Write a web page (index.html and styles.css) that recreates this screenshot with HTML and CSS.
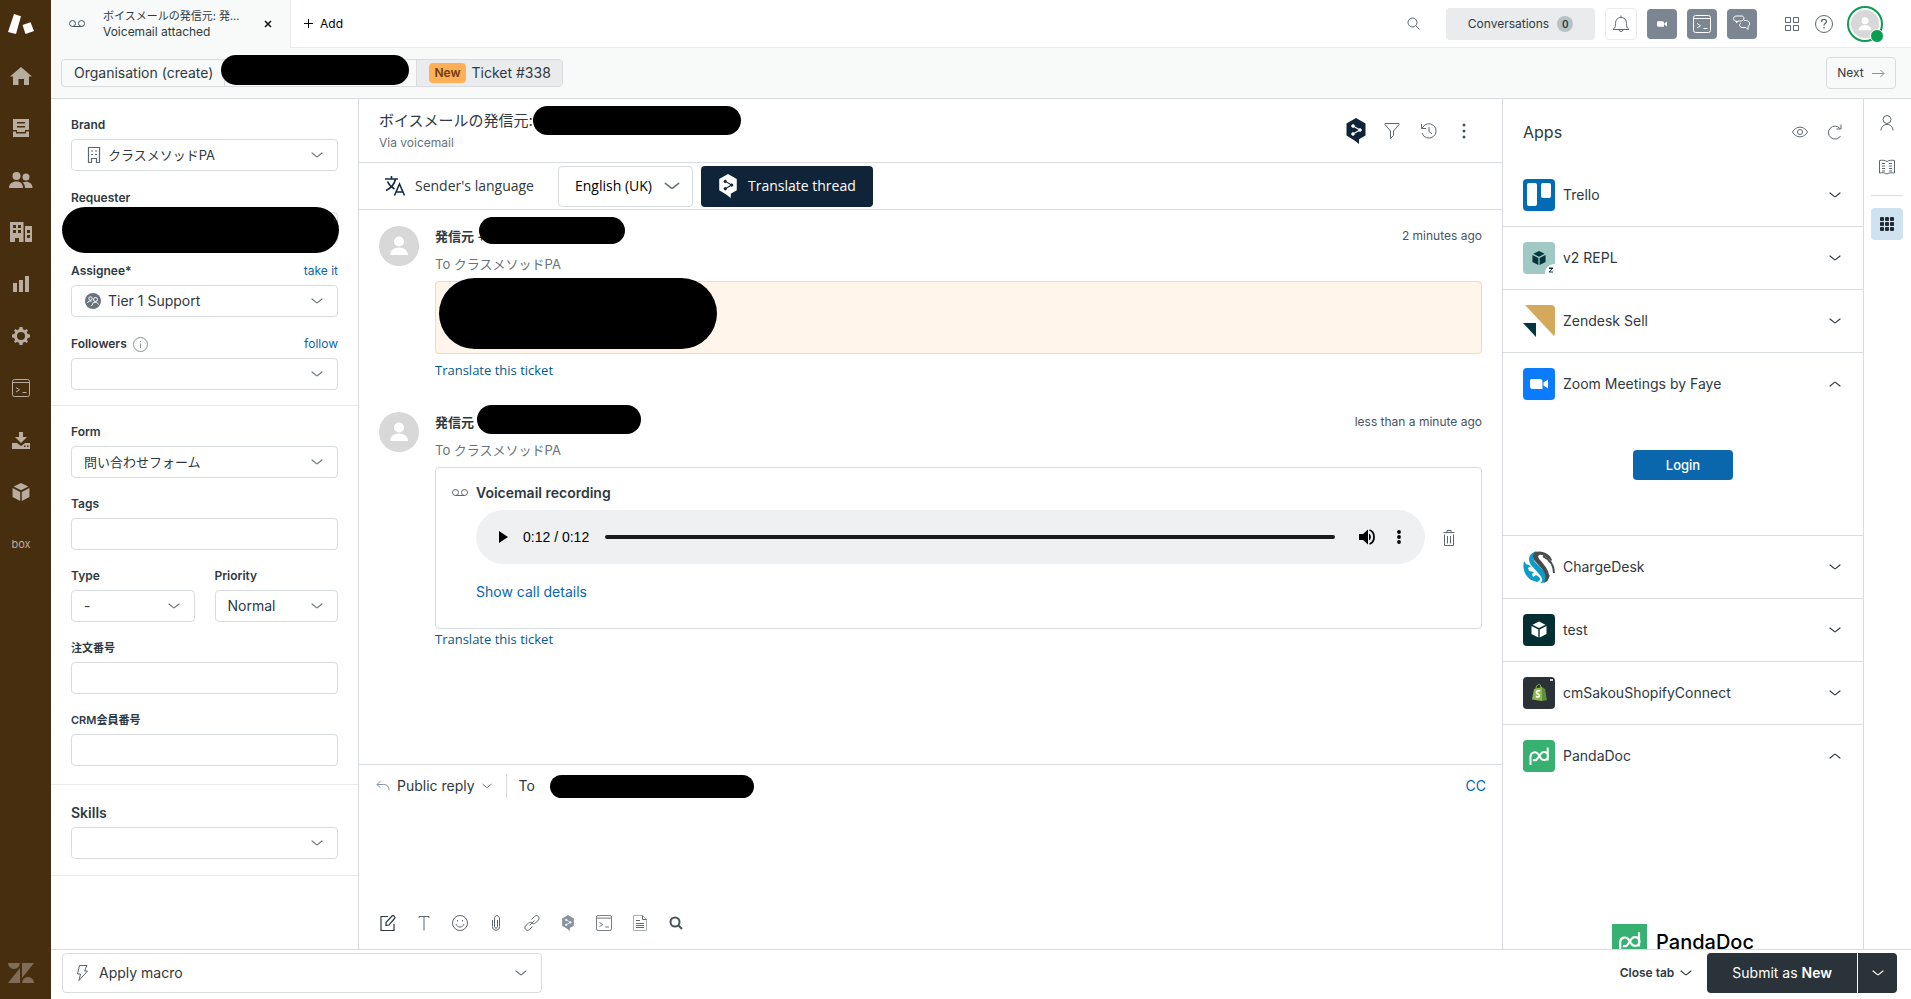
FILE: index.html
```html
<!DOCTYPE html>
<html lang="en">
<head>
    <meta charset="utf-8">
    <title>Ticket #338</title>
    <link rel="stylesheet" href="styles.css">
</head>
<body>
    <!-- shared icons -->
    <svg class="sprite" aria-hidden="true">
        <symbol id="chevron-down" viewBox="0 0 12 12"><path d="M1 4 L5.5 7.6 Q6 8 6.5 7.6 L11 4" fill="none" stroke="currentColor" stroke-width="1.2" stroke-linecap="round"/></symbol>
        <symbol id="chevron-up" viewBox="0 0 12 12"><path d="M1 8 L5.5 4.4 Q6 4 6.5 4.4 L11 8" fill="none" stroke="currentColor" stroke-width="1.2" stroke-linecap="round"/></symbol>
        <symbol id="voicemail" viewBox="0 0 16 16"><g fill="none" stroke="currentColor"><circle cx="3.5" cy="7.5" r="3"/><circle cx="12.5" cy="7.5" r="3"/><path d="M3.5 10.5h9"/></g></symbol>
        <symbol id="terminal" viewBox="0 0 18 18"><g fill="none" stroke="currentColor"><rect x=".5" y=".5" width="17" height="17" rx="2"/><path d="M.5 3.5h17M4 8.5l3.5 2.3L4 13M10.5 13.5h4"/></g></symbol>
        <symbol id="person" viewBox="0 0 40 40"><circle cx="20" cy="20" r="20" fill="#d8d8d8"/><circle cx="20" cy="15.5" r="5" fill="#fff"/><path d="M11 29c0-4.5 4-7.5 9-7.5s9 3 9 7.5z" fill="#fff"/></symbol>
        <symbol id="cube" viewBox="0 0 16 16"><path d="M8 0l6.5 3.2L8 6.5 1.5 3.2zM.5 4.5L7.3 8v8L.5 12.5zM15.5 4.5L8.7 8v8l6.800-3.5z" fill="currentColor"/></symbol>
        <symbol id="deepl" viewBox="0 0 20 26"><path d="M10 0l9.500 5.500v12L13 21.300V26l-4.500-3.500L.5 17.500v-12z" fill="currentColor"/><g fill="var(--dot)" stroke="var(--dot)"><path d="M7 8l7 4-7 4" fill="none" stroke-width="1.200"/><circle cx="7" cy="8" r="1.300"/><circle cx="14" cy="12" r="1.300"/><circle cx="7" cy="16" r="1.300"/></g></symbol>
        <symbol id="camera" viewBox="0 0 18 10"><path d="M0 1.500Q0 0 1.500 0H10q2.500 0 2.500 2.500V10H3Q0 10 0 7.500zM13.500 3.500L18 .5v9l-4.500-3z" fill="currentColor"/></symbol>
        <symbol id="pandadoc" viewBox="0 0 32 32"><path fill="#36b171" d="M0 0h32v32H0z"/><path d="M7.500 25V16.500a4.300 4.300 0 0 1 8-2l2.500 4a4 4 0 1 0 0-5l-3 4.500a4.200 4.200 0 0 1-5 2M24.700 7.500v13" fill="none" stroke="#fff" stroke-width="2"/></symbol>
    </svg>

    <div class="app">
        <nav class="sidebar">
            <a href="#" class="logo" aria-label="Support"><svg width="26" height="20" viewBox="0 0 26 20" fill="#fff"><path d="M6 0l7 2.200L8 20 0 18zM14.500 11l8-2.800L26 17l-8.500 3z"/></svg></a>
            <a href="#" aria-label="Home"><svg width="22" height="18" viewBox="0 0 22 18"><path d="M11 0L22 9.500h-3V18h-5v-6H8.500v6H3V9.500H0z"/></svg></a>
            <a href="#" aria-label="Views"><svg width="16" height="18" viewBox="0 0 16 18"><path fill-rule="evenodd" d="M0 0h16v11h-4v2H4v-2H0zM4 3v1.500h8V3zM4 7v1.500h8V7zM0 12.500h3v2h10v-2h3V18H0z"/></svg></a>
            <a href="#" aria-label="Customers"><svg width="24" height="16" viewBox="0 0 24 16"><circle cx="7.500" cy="4" r="4"/><circle cx="17" cy="5" r="3.500"/><path d="M0 16c0-4 3-6.500 7.500-6.500S14 12 14 16zM16 16c0-2.500-1-4.500-2.500-5.700 5-1.800 10 .2 10 5.700z"/></svg></a>
            <a href="#" aria-label="Organisations"><svg width="22" height="20" viewBox="0 0 22 20"><path fill-rule="evenodd" d="M0 0h13.500v20H9v-4H5v4H0zM3 3v3h3V3zM8 3v3h3V3zM3 8v3h3V8zM8 8v3h3V8zM15 4h7v16h-7zM17 8v3h3V8zM17 13v3h3v-3z"/></svg></a>
            <a href="#" aria-label="Reporting"><svg width="16" height="16" viewBox="0 0 16 16"><path d="M0 7h4v9H0zM6 4h4v12H6zM12 0h4v16h-4z"/></svg></a>
            <a href="#" aria-label="Admin"><svg width="18" height="18" viewBox="0 0 18 18"><circle cx="9" cy="9" r="5.500" fill="none" stroke="#b9ad9f" stroke-width="3"/><path d="M7.500 0h3l.5 3H7zM7.500 18h3l.5-3H7zM0 7.500v3l3 .5V7zM18 7.500v3l-3 .5V7zM2 3.500L3.500 2 6 4 4 6zM16 3.500L14.500 2 12 4l2 2zM2 14.500L3.500 16 6 14l-2-2zM16 14.500L14.500 16 12 14l2-2z"/></svg></a>
            <a href="#" aria-label="Console"><svg width="18" height="18"><use href="#terminal"/></svg></a>
            <a href="#" aria-label="Downloads"><svg width="18" height="17" viewBox="0 0 18 17"><path fill-rule="evenodd" d="M7 0h4v5h4L9 11 3 5h4zM0 11h5l4 3 4-3h5v6H0zM12 13.500V15h1.500v-1.500zM15 13.500V15h1.500v-1.500z"/></svg></a>
            <a href="#" aria-label="Apps"><svg width="18" height="18"><use href="#cube"/></svg></a>
            <a href="#" class="box-link">box</a>
            <a href="#" class="zendesk" aria-label="Zendesk"><svg width="26" height="20" viewBox="0 0 26 20"><path d="M0 0h12a6 6 0 0 1-12 0zM12 5v15H0zM14 0h12L14 15zM14 20a6 6 0 0 1 12 0z"/></svg></a>
        </nav>

        <div class="page">
            <header class="topbar">
                <div class="tab">
                    <svg width="16" height="16"><use href="#voicemail"/></svg>
                    <div class="tab-text">
                        <div class="tab-title">ボイスメールの発信元: 発...</div>
                        <div>Voicemail attached</div>
                    </div>
                    <button class="tab-close" aria-label="Close"><svg width="8" height="8" viewBox="0 0 8 8"><path d="M1 1l6 6M7 1L1 7" stroke="#111" stroke-width="1.500"/></svg></button>
                </div>
                <div class="topbar-rest">
                    <button class="add"><svg width="9" height="9" viewBox="0 0 9 9"><path d="M4.500 0v9M0 4.500h9" stroke="#000"/></svg>Add</button>
                    <div class="top-tools">
                        <button class="search" aria-label="Search"><svg class="line" width="13" height="13" viewBox="0 0 13 13"><circle cx="5.500" cy="5.500" r="4.500"/><path d="M9 9l3.500 3.500"/></svg></button>
                        <button class="conversations">Conversations <span>0</span></button>
                        <button class="tool bell" aria-label="Notifications"><svg class="line" width="18" height="18" viewBox="0 0 18 18"><path d="M9 .5v2M1 14.500c2-1.500 2.500-3 2.500-6C3.500 4.500 6 2.500 9 2.500s5.500 2 5.500 6c0 3 .5 4.500 2.500 6zM7 14.500a2 2 0 0 0 4 0"/></svg></button>
                        <button class="tool grey" aria-label="Zoom"><svg width="10" height="6"><use href="#camera"/></svg></button>
                        <button class="tool grey" aria-label="Console"><svg width="18" height="18"><use href="#terminal"/></svg></button>
                        <button class="tool grey" aria-label="Chat"><svg width="18" height="18" viewBox="0 0 18 18" fill="none" stroke="currentColor"><path d="M2 6C0 5 0 1.500 3 1h6c2.500.2 3 4-.5 5H5L3.500 8V6zM11 5.500h2.500C17 6 17.500 10 15 11.500v3L13 12.500H9C6 12 6 9 8 8"/></svg></button>
                        <button class="plain products" aria-label="Products"><svg class="line" width="14" height="14" viewBox="0 0 14 14"><path d="M.5.5h5v5h-5zM8.500.5h5v5h-5zM.5 8.500h5v5h-5zM8.500 8.500h5v5h-5z"/></svg></button>
                        <button class="plain" aria-label="Help"><svg class="line" width="18" height="18" viewBox="0 0 18 18"><circle cx="9" cy="9" r="8.500"/><path d="M6.500 7c0-3.500 5-3.200 5-.5 0 1.800-2.500 1.700-2.500 4M9 12v1.500" stroke-width="1.300"/></svg></button>
                        <button class="plain profile" aria-label="Profile"><svg width="36" height="36" viewBox="0 0 36 36"><circle cx="18" cy="18" r="17" fill="#fff" stroke="#0b9e53" stroke-width="2"/><use href="#person" x="4" y="4" width="28" height="28"/><circle cx="30" cy="30" r="6.500" fill="#0b9e53" stroke="#fff"/></svg></button>
                    </div>
                </div>
            </header>

            <div class="crumbs">
                <div class="crumb-group">
                    <a href="#">Organisation (create)</a>
                    <a href="#" class="crumb-user" aria-label="Requester"><span class="redacted"></span></a>
                    <a href="#" class="current"><b class="badge">New</b>Ticket #338</a>
                </div>
                <button class="next">Next <svg width="13" height="9" viewBox="0 0 13 9" fill="none" stroke="#87929d"><path d="M0 4.500h12M8.500 1L12 4.500 8.500 8"/></svg></button>
            </div>

            <main class="workspace">
                <form class="properties">
                    <section class="people">
                        <div class="field">
                            <label for="brand">Brand</label>
                            <div class="control">
                                <svg class="line" width="20" height="16" viewBox="0 0 20 16"><path d="M4.500.5h11v15h-3v-4h-5v4h-3zM7 4h2M11 4h2M7 7.500h2M11 7.500h2" stroke-width="1.200"/></svg>
                                <select id="brand" class="ja"><option>クラスメソッドPA</option></select>
                                <svg width="12" height="12"><use href="#chevron-down"/></svg>
                            </div>
                        </div>
                        <div class="field">
                            <label for="requester">Requester</label>
                            <div class="control">
                                <input id="requester" type="text">
                                <span class="redacted requester"></span>
                            </div>
                        </div>
                        <div class="field">
                            <div class="label-row"><label for="assignee">Assignee*</label><a href="#">take it</a></div>
                            <div class="control">
                                <svg width="20" height="16" viewBox="0 0 20 16"><circle cx="9" cy="8" r="8" fill="#68737d"/><g fill="none" stroke="#fff"><circle cx="6.500" cy="5.500" r="1.700"/><circle cx="11.500" cy="6.500" r="2"/><path d="M3.500 10c.5-2 2.500-2.500 4-1.500M7.500 13l2-3.500c2-1 4 0 5 2"/></g></svg>
                                <select id="assignee"><option>Tier 1 Support</option></select>
                                <svg width="12" height="12"><use href="#chevron-down"/></svg>
                            </div>
                        </div>
                        <div class="field">
                            <div class="label-row"><label for="followers">Followers</label><svg width="15" height="15" viewBox="0 0 15 15" fill="none" stroke="#87929d"><circle cx="7.500" cy="7.500" r="7"/><path d="M7.500 6.500V11M7.500 4v1"/></svg><a href="#">follow</a></div>
                            <div class="control">
                                <select id="followers"><option></option></select>
                                <svg width="12" height="12"><use href="#chevron-down"/></svg>
                            </div>
                        </div>
                    </section>
                    <section>
                        <div class="field">
                            <label for="form">Form</label>
                            <div class="control">
                                <select id="form" class="ja"><option>問い合わせフォーム</option></select>
                                <svg width="12" height="12"><use href="#chevron-down"/></svg>
                            </div>
                        </div>
                        <div class="field">
                            <label for="tags">Tags</label>
                            <div class="control"><input id="tags" type="text"></div>
                        </div>
                        <div class="pair">
                            <div class="field">
                                <label for="type">Type</label>
                                <div class="control">
                                    <select id="type"><option>-</option></select>
                                    <svg width="12" height="12"><use href="#chevron-down"/></svg>
                                </div>
                            </div>
                            <div class="field">
                                <label for="priority">Priority</label>
                                <div class="control">
                                    <select id="priority"><option>Normal</option></select>
                                    <svg width="12" height="12"><use href="#chevron-down"/></svg>
                                </div>
                            </div>
                        </div>
                        <div class="field">
                            <label for="order" class="ja-label">注文番号</label>
                            <div class="control"><input id="order" type="text"></div>
                        </div>
                        <div class="field">
                            <label for="crm" class="ja-label">CRM会員番号</label>
                            <div class="control"><input id="crm" type="text"></div>
                        </div>
                    </section>
                    <section class="skills">
                        <div class="field">
                            <label for="skills">Skills</label>
                            <div class="control">
                                <select id="skills"><option></option></select>
                                <svg width="12" height="12"><use href="#chevron-down"/></svg>
                            </div>
                        </div>
                    </section>
                </form>

                <div class="ticket">
                    <div class="ticket-header">
                        <div>
                            <h1>ボイスメールの発信元:<span class="redacted"></span></h1>
                            <p>Via voicemail</p>
                        </div>
                        <div class="ticket-tools">
                            <button aria-label="Translate"><svg class="deepl-dark" width="20" height="26"><use href="#deepl"/></svg></button>
                            <button aria-label="Filter"><svg class="line" width="16" height="16" viewBox="0 0 16 16"><path d="M1 .5h14v1L9.500 8v4.500L6.500 15.500V8L1 1.500z"/></svg></button>
                            <button aria-label="History"><svg class="line" width="17" height="16" viewBox="0 0 17 16"><path d="M2.300 5A7.200 7.200 0 1 1 2 10M1.500 1v4.500H6M9 4v4.500l3 2.500"/></svg></button>
                            <button aria-label="More"><svg width="16" height="16" viewBox="0 0 16 16" fill="#49545c"><circle cx="8" cy="2" r="1.500"/><circle cx="8" cy="8" r="1.500"/><circle cx="8" cy="14" r="1.500"/></svg></button>
                        </div>
                    </div>

                    <div class="translate-bar">
                        <svg width="20" height="20" viewBox="0 0 20 20" fill="none" stroke="#0f2b46" stroke-width="1.600"><path d="M0 3h13M6.500 0v3M2.500 5.500C4 9 7 11.500 9.500 13M10.500 3C9.500 8 6 12 1 14.500M9.500 19.500L14.500 8l5 11.500M11 16h7"/></svg>
                        <span>Sender's language</span>
                        <div class="language">
                            <select aria-label="Target language"><option>English (UK)</option></select>
                            <svg width="16" height="16"><use href="#chevron-down"/></svg>
                        </div>
                        <button><svg class="deepl-light" width="20" height="24"><use href="#deepl"/></svg>Translate thread</button>
                    </div>

                    <div class="conversation">
                        <article class="message">
                            <svg width="40" height="40"><use href="#person"/></svg>
                            <div class="message-body">
                                <div class="message-top"><b>発信元 +</b><span class="redacted caller"></span><time>2 minutes ago</time></div>
                                <p class="message-to">To クラスメソッドPA</p>
                                <div class="note"><span class="redacted"></span></div>
                                <a href="#" class="translate-link">Translate this ticket</a>
                            </div>
                        </article>
                        <article class="message">
                            <svg width="40" height="40"><use href="#person"/></svg>
                            <div class="message-body">
                                <div class="message-top"><b>発信元</b><span class="redacted caller wide"></span><time>less than a minute ago</time></div>
                                <p class="message-to">To クラスメソッドPA</p>
                                <div class="voicemail">
                                    <svg class="line" width="16" height="16"><use href="#voicemail"/></svg>
                                    <h2>Voicemail recording</h2>
                                    <div class="player">
                                        <button aria-label="Play"><svg width="10" height="12" viewBox="0 0 10 12"><path d="M0 0l9 6-9 6z"/></svg></button>
                                        <span>0:12 / 0:12</span>
                                        <input type="range" min="0" max="12" value="12" aria-label="Position">
                                        <button aria-label="Volume"><svg width="16" height="16" viewBox="0 0 16 16"><path d="M0 5h4l5-4.500v15L4 11H0z"/><path d="M10 4.500c2.500 1.500 2.500 5.500 0 7z"/><path d="M10.500 1c6 2 6 12 0 14" fill="none" stroke="#000" stroke-width="1.800"/></svg></button>
                                        <button aria-label="Options"><svg width="4" height="14" viewBox="0 0 4 14"><circle cx="2" cy="2" r="1.900"/><circle cx="2" cy="7" r="1.900"/><circle cx="2" cy="12" r="1.900"/></svg></button>
                                    </div>
                                    <button class="trash" aria-label="Delete"><svg class="line" width="12" height="16" viewBox="0 0 12 16"><path d="M.5 2.500h11M4 2.500v-2h4v2M1.500 4.500v11h9v-11M4.500 6v7.500M7.500 6v7.500"/></svg></button>
                                    <a href="#" class="details">Show call details</a>
                                </div>
                                <a href="#" class="translate-link after-card">Translate this ticket</a>
                            </div>
                        </article>
                    </div>

                    <div class="reply">
                        <div class="reply-top">
                            <button class="channel"><svg width="14" height="12" viewBox="0 0 14 12" fill="none" stroke="#87929d"><path d="M4.500 1L1 4.500 4.500 8M1 4.500h6.500c4 0 5.500 2.500 5.500 6"/></svg>Public reply<svg width="10" height="10"><use href="#chevron-down"/></svg></button>
                            <span class="to">To</span>
                            <span class="redacted"></span>
                            <a href="#">CC</a>
                        </div>
                        <div class="reply-tools">
                            <button aria-label="Compose"><svg width="16" height="16" viewBox="0 0 16 16" fill="none" stroke="#2f3941"><path d="M8 1.500H1v14h13V9M6 10.500V7.500l6-6.500q1-1 2 0t1 2L9 10z" stroke-width="1.200"/></svg></button>
                            <button aria-label="Text"><svg class="line" width="16" height="16" viewBox="0 0 16 16"><path d="M3 3V1.500h10V3M8 1.500v14"/></svg></button>
                            <button aria-label="Emoji"><svg class="line" width="16" height="16" viewBox="0 0 16 16"><circle cx="8" cy="8" r="7.500"/><path d="M4 9c1 4 7 4 8 0M5.500 5v1.500M10.500 5v1.500"/></svg></button>
                            <button aria-label="Attach"><svg class="line" width="16" height="16" viewBox="0 0 16 16"><path d="M4.500 5v6.500c0 5 7 5 7 0V4c0-4.500-5-4.500-5 0v7.500c0 2 3 2 3 0V5"/></svg></button>
                            <button aria-label="Link"><svg class="line" width="16" height="16" viewBox="0 0 16 16"><path d="M5.500 10.500l5-5M7.500 4.500l3-3c2.500-2.500 6 1 4 3.500l-3 3c-1 1-2.500 1-3.500 0M8.500 11.500l-3 3c-2.500 2.500-6-1-4-3.500l3-3c1-1 2.500-1 3.500 0"/></svg></button>
                            <button aria-label="DeepL"><svg class="deepl-grey" width="16" height="16"><use href="#deepl"/></svg></button>
                            <button aria-label="Console"><svg class="line" width="16" height="16"><use href="#terminal"/></svg></button>
                            <button aria-label="Templates"><svg class="line" width="16" height="16" viewBox="0 0 16 16"><path d="M1.500.5h9l4 4v11h-13z" stroke="#aab1b8"/><path d="M10.500.5v4h4M4 5.500h4M4 8.500h8M4 10.500h8M4 12.500h8"/></svg></button>
                            <button aria-label="Search"><svg width="14" height="14" viewBox="0 0 14 14" fill="none" stroke="#49545c" stroke-width="2"><circle cx="6" cy="6" r="4.500"/><path d="M9.500 9.500L13 13"/></svg></button>
                        </div>
                    </div>
                </div>

                <aside class="apps">
                    <div class="apps-header">
                        <h2>Apps</h2>
                        <button aria-label="Show"><svg class="line" width="16" height="16" viewBox="0 0 16 16"><path d="M.5 8C4 1.500 12 1.500 15.500 8 12 14.500 4 14.500.5 8z"/><circle cx="8" cy="8" r="2.500"/></svg></button>
                        <button aria-label="Reload"><svg class="line" width="14" height="16" viewBox="0 0 14 16"><path d="M12 4.500A6.500 6.500 0 1 0 12.500 12M13 .5v4.500H8.500"/></svg></button>
                    </div>
                    <div class="app-item">
                        <button class="app-row"><svg class="app-icon" viewBox="0 0 32 32"><path fill="#026bb5" d="M0 0h32v32H0z"/><rect x="4" y="4" width="10" height="23" rx="2" fill="#fff"/><rect x="18" y="4" width="10" height="15" rx="2" fill="#fff"/></svg><span>Trello</span><svg width="12" height="12"><use href="#chevron-down"/></svg></button>
                    </div>
                    <div class="app-item">
                        <button class="app-row"><svg class="app-icon" viewBox="0 0 32 32" color="#03363d"><path fill="#a0c8c5" d="M0 0h32v32H0z"/><use href="#cube" x="9" y="8" width="14" height="16"/><circle cx="31" cy="31" r="9" fill="#fff"/><path d="M26 26h4l-4 4h4M26 26.500h4" stroke="#03363d" fill="none"/></svg><span>v2 REPL</span><svg width="12" height="12"><use href="#chevron-down"/></svg></button>
                    </div>
                    <div class="app-item">
                        <button class="app-row"><svg class="app-icon" viewBox="0 0 32 32"><path fill="#d4a95b" d="M2 0h30v32z"/><path fill="#03363d" d="M0 18h13v14z"/></svg><span>Zendesk Sell</span><svg width="12" height="12"><use href="#chevron-down"/></svg></button>
                    </div>
                    <div class="app-item">
                        <button class="app-row"><svg class="app-icon" viewBox="0 0 32 32" color="#fff"><path fill="#0b7cff" d="M0 0h32v32H0z"/><use href="#camera" x="7" y="11" width="18" height="10"/></svg><span>Zoom Meetings by Faye</span><svg width="12" height="12"><use href="#chevron-up"/></svg></button>
                        <div class="zoom-body"><button>Login</button></div>
                    </div>
                    <div class="app-item">
                        <button class="app-row"><svg class="app-icon" viewBox="0 0 32 32" fill="none"><path d="M14 0C6 2 4 8 8 14l8 9c3 3 5 7 1 9 4 0 7-1 8-4 0-4-2-6-5-9l-8-8C9 7 10 3 14 0z" fill="#0d9bc9"/><path d="M1 10c-2 8 1 15 7 19l6 2c3-1 4-3 2-5l-3-2-3 2-1-3 2-2-5-1-1-3 3-2-5-2z" fill="#0d9bc9"/><path d="M12 1c8-2 15 2 17 8l-1 1c-4-4-8-7-12-6-2 2 0 4 2 6 5 6 8 10 8 15 0 3-2 5-5 7 3-7 1-10-2-14l-8-9c-2-3-1-6 1-8z" fill="#4a4b4d"/><path d="M20 5c6 3 11 9 11 17M26 24l-3 6" stroke="#4a4b4d" stroke-width="2"/></svg><span>ChargeDesk</span><svg width="12" height="12"><use href="#chevron-down"/></svg></button>
                    </div>
                    <div class="app-item">
                        <button class="app-row"><svg class="app-icon" viewBox="0 0 32 32" color="#fff"><path fill="#032e32" d="M0 0h32v32H0z"/><use href="#cube" x="8" y="7" width="16" height="17"/></svg><span>test</span><svg width="12" height="12"><use href="#chevron-down"/></svg></button>
                    </div>
                    <div class="app-item">
                        <button class="app-row"><svg class="app-icon" viewBox="0 0 32 32"><path fill="#2a3238" d="M0 0h32v32H0z"/><path fill="#8fb84a" d="M11 12l8-2v14L9 22.500z"/><path fill="#5e8e3e" d="M19 10l3 2 2 11-5 1z"/><path d="M13 12c0-3 2-5 3.500-4.500S18 10 18 11" fill="none" stroke="#8fb84a"/><path d="M17 14c-4-1-4.500 2-2 3s1.500 4-2 2.500" fill="none" stroke="#fff" stroke-width="1.600"/><path fill="#cdd1d4" d="M27 2h3v2h-3z"/></svg><span>cmSakouShopifyConnect</span><svg width="12" height="12"><use href="#chevron-down"/></svg></button>
                    </div>
                    <div class="app-item">
                        <button class="app-row"><svg class="app-icon"><use href="#pandadoc"/></svg><span>PandaDoc</span><svg width="12" height="12"><use href="#chevron-up"/></svg></button>
                        <div class="panda-body"><svg width="35" height="35"><use href="#pandadoc"/></svg>PandaDoc</div>
                    </div>
                </aside>

                <nav class="rail">
                    <button aria-label="Customer"><svg class="line" width="14" height="16" viewBox="0 0 14 16"><circle cx="7" cy="4.500" r="4"/><path d="M1 15.500c0-8 12-8 12 0"/></svg></button>
                    <button aria-label="Knowledge"><svg class="line" width="16" height="16" viewBox="0 0 16 16"><path d="M8 2.500C6 1.200 3 1 .5 1.500v12.500c2.500-.5 5.500-.3 7.500 1 2-1.300 5-1.500 7.500-1V1.500C13 1 10 1.200 8 2.500zM3 4.500h3M3 7h3M3 9.500h3M3 12h3M10 4.500h3M10 7h3M10 9.500h3M10 12h3"/></svg></button>
                    <hr>
                    <button class="active" aria-label="Apps"><svg width="14" height="14" viewBox="0 0 14 14" fill="#1f2a33"><rect width="4" height="4" rx="1"/><rect x="5" width="4" height="4" rx="1"/><rect x="10" width="4" height="4" rx="1"/><rect y="5" width="4" height="4" rx="1"/><rect x="5" y="5" width="4" height="4" rx="1"/><rect x="10" y="5" width="4" height="4" rx="1"/><rect y="10" width="4" height="4" rx="1"/><rect x="5" y="10" width="4" height="4" rx="1"/><rect x="10" y="10" width="4" height="4" rx="1"/></svg></button>
                </nav>
            </main>

            <footer class="footer">
                <div class="control macro">
                    <svg class="line" width="14" height="16" viewBox="0 0 14 16"><path d="M4.500.5H12L9.500 6h3L4 15.500 5.500 9h-3z"/></svg>
                    <select aria-label="Macro"><option>Apply macro</option></select>
                    <svg width="12" height="12"><use href="#chevron-down"/></svg>
                </div>
                <div class="footer-actions">
                    <button class="close-tab">Close tab<svg width="12" height="12"><use href="#chevron-down"/></svg></button>
                    <button class="submit">Submit as <b>New</b></button>
                    <button class="submit-more" aria-label="Submit options"><svg width="12" height="12"><use href="#chevron-down"/></svg></button>
                </div>
            </footer>
        </div>
    </div>
</body>
</html>
```

FILE: styles.css
```css
* {
    box-sizing: border-box;
}

body {
    margin: 0;
    font-family: Inter, "Noto Sans CJK JP", sans-serif;
    font-size: 14px;
    line-height: 20px;
    color: #2f3941;
    background-color: #fff;
}

h1, h2, p {
    margin: 0;
    font-size: 14px;
    font-weight: 400;
}

a {
    color: #0a66ad;
    text-decoration: none;
}

button, input, select {
    font: inherit;
    color: inherit;
    background: none;
    border: 0;
    padding: 0;
    margin: 0;
}

button {
    display: flex;
    align-items: center;
    justify-content: center;
    cursor: pointer;
}

select {
    appearance: none;
    outline: none;
}

svg {
    flex: none;
    display: block;
}

.sprite {
    position: absolute;
    width: 0;
    height: 0;
}

.line {
    fill: none;
    stroke: #5c6770;
    color: #5c6770;
}

.redacted {
    display: block;
    background-color: #000;
    border-radius: 40px;
}

.app {
    display: flex;
    height: 100vh;
}

/* left navigation */
.sidebar {
    flex: none;
    width: 51px;
    padding-right: 9px;
    background-color: #462e0f;
    display: flex;
    flex-direction: column;
    align-items: center;
}

.sidebar a {
    height: 52px;
    display: flex;
    align-items: center;
    color: #b9ad9f;
    fill: #b9ad9f;
}

.sidebar .logo {
    height: 48px;
    margin-bottom: 2px;
}

.sidebar .box-link {
    font-size: 11px;
}

.sidebar .zendesk {
    margin-top: auto;
    opacity: 0.5;
}

.page {
    flex: 1;
    min-width: 0;
    display: flex;
    flex-direction: column;
}

/* top bar */
.topbar {
    height: 48px;
    display: flex;
    flex: none;
    font-size: 12px;
}

.tab {
    width: 240px;
    padding: 0 18px 0 18px;
    background-color: #f8f9f9;
    border-right: 1px solid #e9ebed;
    display: flex;
    align-items: center;
    color: #49545c;
}

.tab-text {
    margin-left: 18px;
    flex: 1;
    line-height: 16px;
    white-space: nowrap;
    color: #2f3941;
}

.tab-title {
    font-size: 11px;
}

.topbar-rest {
    flex: 1;
    display: flex;
    align-items: center;
    justify-content: space-between;
    padding: 0 28px 0 13px;
    border-bottom: 1px solid #e9ebed;
}

.add {
    gap: 7px;
    color: #000;
}

.top-tools {
    display: flex;
    align-items: center;
    gap: 10px;
}

.search {
    margin-right: 16px;
}

.conversations {
    width: 149px;
    height: 32px;
    gap: 8px;
    background-color: #e9ebed;
    border-radius: 4px;
}

.conversations span {
    width: 16px;
    height: 16px;
    line-height: 16px;
    font-size: 10px;
    font-weight: 600;
    background-color: #b9c1c4;
    border-radius: 8px;
}

.tool {
    width: 30px;
    height: 30px;
    border-radius: 4px;
}

.bell {
    width: 32px;
    height: 32px;
    border: 1px solid #e9ebed;
}

.grey {
    background-color: #7b8692;
    color: #fff;
}

.plain {
    margin-left: 4px;
}

.products {
    margin-left: 18px;
    margin-right: 2px;
}

/* breadcrumb bar */
.crumbs {
    height: 51px;
    flex: none;
    display: flex;
    align-items: center;
    justify-content: space-between;
    padding: 0 15px 0 10px;
    background-color: #f8f9f9;
    border-bottom: 1px solid #d8dcde;
}

.crumb-group {
    display: flex;
    border: 1px solid #d8dcde;
    border-radius: 4px;
}

.crumb-group a {
    height: 26px;
    display: flex;
    align-items: center;
    padding: 0 11px 0 12px;
    color: #2f3941;
}

.crumb-group a + a {
    border-left: 1px solid #d8dcde;
}

.crumb-group .crumb-user {
    width: 192px;
    padding: 0;
}

.crumb-user .redacted {
    flex: 1;
    height: 30px;
    margin: -6px 7px 0 -4px;
}

.crumb-group .current {
    background-color: #e9ebed;
    gap: 6px;
}

.badge {
    padding: 0 5px;
    font-size: 12px;
    font-weight: 600;
    color: #703b15;
    background-color: #ffb057;
    border-radius: 4px;
}

.next {
    width: 70px;
    height: 32px;
    gap: 8px;
    font-size: 12px;
    border: 1px solid #d8dcde;
    border-radius: 4px;
}

/* main columns */
.workspace {
    flex: 1;
    min-height: 0;
    display: flex;
}

.properties {
    flex: none;
    width: 308px;
    border-right: 1px solid #d8dcde;
    overflow: hidden;
}

.properties section {
    display: flex;
    flex-direction: column;
    gap: 16px;
    padding: 16px 20px 18px;
    border-bottom: 1px solid #e9ebed;
}

.properties .people {
    gap: 17px;
    padding-bottom: 15px;
}

.properties .skills {
    padding: 18px 20px 16px;
}

.field {
    display: flex;
    flex-direction: column;
    gap: 4px;
    min-width: 0;
}

.field label {
    font-size: 12px;
    font-weight: 600;
}

.field .ja-label {
    font-size: 11px;
}

.skills label {
    font-size: 14px;
}

.label-row {
    display: flex;
    align-items: center;
    gap: 6px;
    font-size: 12px;
}

.label-row a {
    margin-left: auto;
}

.control {
    position: relative;
    height: 32px;
    padding: 0 14px 0 12px;
    display: flex;
    align-items: center;
    gap: 4px;
    border: 1px solid #d8dcde;
    border-radius: 4px;
    color: #2f3941;
}

.control select, .control input {
    flex: 1;
    min-width: 0;
    height: 100%;
    outline: none;
}

.control .ja {
    font-size: 13px;
}

.control use {
    color: #68737d;
}

.requester {
    position: absolute;
    top: -6px;
    bottom: -10px;
    left: -10px;
    right: -2px;
}

.pair {
    display: grid;
    grid-template-columns: 1fr 1fr;
    gap: 20px;
}

/* ticket */
.ticket {
    flex: 1;
    min-width: 0;
    display: flex;
    flex-direction: column;
}

.ticket-header {
    height: 64px;
    flex: none;
    padding: 0 20px;
    display: flex;
    align-items: center;
    justify-content: space-between;
    border-bottom: 1px solid #d8dcde;
}

.ticket-header h1 {
    display: flex;
    align-items: center;
    font-size: 15px;
    line-height: 24px;
}

.ticket-header .redacted {
    width: 208px;
    height: 29px;
    margin: -3px 0 -2px;
}

.ticket-header p {
    font-size: 12px;
    color: #68737d;
}

.ticket-tools {
    display: flex;
    gap: 16px;
    padding-right: 8px;
}

.ticket-tools button {
    width: 20px;
}

.deepl-dark {
    color: #0f2439;
    --dot: #fff;
}

.deepl-light {
    color: #fff;
    --dot: #0f2439;
}

.deepl-grey {
    color: #87929d;
    --dot: #fff;
}

.translate-bar {
    height: 47px;
    flex: none;
    padding: 0 26px;
    display: flex;
    align-items: center;
    font-family: "Open Sans", sans-serif;
    border-bottom: 1px solid #d8dcde;
}

.translate-bar span {
    margin: 0 24px 0 10px;
}

.language {
    width: 135px;
    height: 41px;
    padding: 0 12px 0 16px;
    display: flex;
    align-items: center;
    border: 1px solid #d8dcde;
    border-radius: 4px;
    color: #000;
}

.language select {
    flex: 1;
    min-width: 0;
    height: 100%;
}

.language use {
    color: #68737d;
}

.translate-bar button {
    height: 41px;
    margin-left: 8px;
    padding: 0 17px;
    gap: 10px;
    font-weight: 500;
    color: #fff;
    background-color: #0f2439;
    border-radius: 4px;
}

.conversation {
    flex: 1;
    min-height: 0;
    overflow: hidden;
    padding: 16px 20px;
}

.message {
    display: flex;
    gap: 16px;
    margin-bottom: 32px;
}

.message-body {
    flex: 1;
    min-width: 0;
}

.message-top {
    display: flex;
    align-items: center;
    height: 20px;
}

.message-top b {
    font-size: 13px;
    font-weight: 600;
    width: 44px;
    white-space: nowrap;
}

.message-top time {
    margin-left: auto;
    font-size: 12px;
    color: #49545c;
}

.caller {
    position: relative;
    width: 146px;
    height: 27px;
    margin-bottom: 11px;
}

.caller.wide {
    width: 164px;
    height: 29px;
    margin-bottom: 5px;
    margin-left: -2px;
}

.message-to {
    margin: 8px 0 7px;
    font-size: 13px;
    color: #68737d;
}

.note {
    height: 73px;
    border: 1px solid #fed6a8;
    border-radius: 4px;
    background-color: #fff5ea;
}

.note .redacted {
    width: 278px;
    height: 71px;
    margin: -4px 0 0 3px;
}

.translate-link {
    display: block;
    margin-top: 6px;
    font-family: "Open Sans", sans-serif;
    font-size: 13px;
    color: #035a8c;
}

.after-card {
    margin-top: 0;
}

.voicemail {
    display: grid;
    grid-template-columns: 16px 1fr 12px;
    column-gap: 8px;
    align-items: center;
    padding: 15px 26px 16px 16px;
    border: 1px solid #d8dcde;
    border-radius: 4px;
}

.voicemail h2 {
    grid-column: 2 / 4;
    font-weight: 600;
}

.player {
    grid-column: 2;
    height: 54px;
    margin: 7px 10px 18px 0;
    padding: 0 24px 0 23px;
    display: flex;
    align-items: center;
    border-radius: 27px;
    background-color: #eff0f2;
    color: #000;
}

.player span {
    margin: 0 16px 0 14px;
    font-family: "Liberation Sans", sans-serif;
}

.player input {
    flex: 1;
    height: 4px;
    margin-right: 24px;
    appearance: none;
    background-color: #1b1b1b;
    border-radius: 2px;
}

.player input::-webkit-slider-thumb {
    appearance: none;
    width: 0;
}

.player button:last-child {
    margin-left: 22px;
}

.trash {
    margin-bottom: 10px;
}

.details {
    grid-column: 2 / 4;
    padding-bottom: 10px;
}

/* reply editor */
.reply {
    height: 185px;
    flex: none;
    display: flex;
    flex-direction: column;
    justify-content: space-between;
    padding: 9px 16px 14px 17px;
    border-top: 1px solid #d8dcde;
}

.reply-top {
    display: flex;
    align-items: center;
    height: 24px;
}

.channel {
    gap: 7px;
    height: 24px;
    padding-right: 14px;
    border-right: 1px solid #d8dcde;
}

.channel use {
    color: #68737d;
}

.reply-top .to {
    margin: 0 15px 0 12px;
}

.reply-top .redacted {
    width: 204px;
    height: 23px;
}

.reply-top a {
    margin-left: auto;
}

.reply-tools {
    display: flex;
    gap: 12px;
}

.reply-tools button {
    width: 24px;
    height: 24px;
}

/* apps panel */
.apps {
    flex: none;
    width: 362px;
    border: solid #d8dcde;
    border-width: 0 1px;
    overflow: hidden;
}

.apps-header {
    height: 65px;
    display: flex;
    align-items: center;
    gap: 20px;
    padding: 0 21px 0 20px;
}

.apps-header h2 {
    flex: 1;
    font-size: 16px;
}

.app-item + .app-item {
    border-top: 1px solid #d8dcde;
}

.app-row {
    width: 100%;
    padding: 15px 22px 15px 20px;
    gap: 8px;
    text-align: left;
}

.app-row span {
    flex: 1;
}

.app-icon {
    width: 32px;
    height: 32px;
    border-radius: 4px;
}

.zoom-body {
    padding: 35px 0 55px;
    display: flex;
    justify-content: center;
}

.zoom-body button {
    width: 100px;
    height: 30px;
    font-size: 13px;
    font-weight: 500;
    color: #fff;
    background-color: #0a67ad;
    border-radius: 4px;
}

.panda-body {
    padding-top: 137px;
    display: flex;
    justify-content: center;
    align-items: center;
    gap: 9px;
    font-size: 20px;
    line-height: 16px;
    font-weight: 500;
    color: #000;
}

.rail {
    flex: none;
    width: 47px;
    padding: 8px 1px 0 0;
    display: flex;
    flex-direction: column;
    align-items: center;
    gap: 12px;
}

.rail button {
    width: 32px;
    height: 32px;
    border-radius: 4px;
}

.rail hr {
    width: 32px;
    margin: 0;
    border: 0;
    border-top: 1px solid #d8dcde;
}

.rail .active {
    background-color: #cee2f0;
}

/* footer */
.footer {
    height: 50px;
    flex: none;
    display: flex;
    justify-content: space-between;
    padding: 3px 14px 0 11px;
    border-top: 1px solid #d8dcde;
}

.macro {
    width: 480px;
    height: 40px;
    gap: 10px;
}

.footer-actions {
    display: flex;
    height: 40px;
}

.close-tab {
    gap: 6px;
    margin-right: 15px;
    font-size: 12px;
    font-weight: 600;
}

.submit {
    padding: 0 25px;
    margin-right: 1px;
    white-space: pre;
    color: #fff;
    background-color: #2a323a;
    border-radius: 4px 0 0 4px;
}

.submit b {
    font-weight: 600;
}

.submit-more {
    width: 39px;
    color: #fff;
    background-color: #2a323a;
    border-radius: 0 4px 4px 0;
}
```
